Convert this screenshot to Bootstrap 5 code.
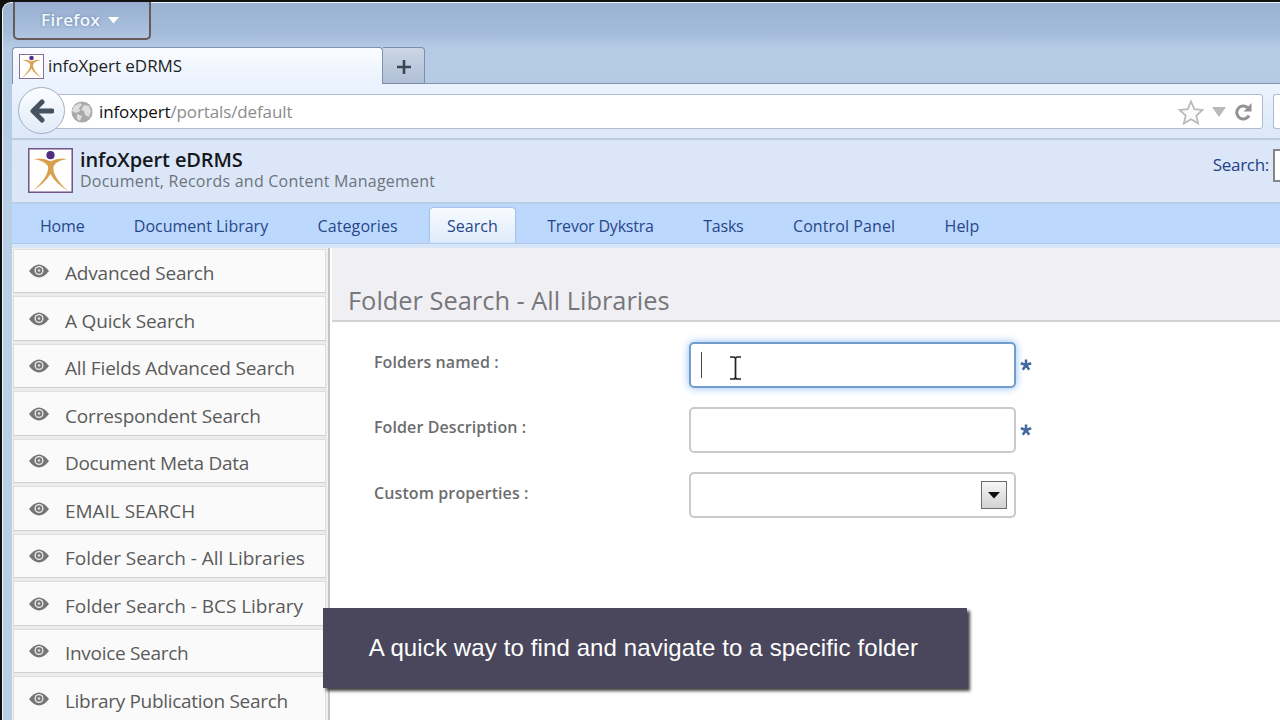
<!DOCTYPE html>
<html lang="en">
<head>
<meta charset="utf-8">
<meta name="viewport" content="width=device-width, initial-scale=1">
<title>infoXpert eDRMS</title>
<link href="https://cdn.jsdelivr.net/npm/bootstrap@5.3.0/dist/css/bootstrap.min.css" rel="stylesheet">
<style>
  body { font-family: "Open Sans", "Noto Sans", sans-serif; background: #111; line-height: 1.2; }
  .screen { width: 1280px; height: 720px; padding: 2px 0 0 2px; }
  .win { height: 718px; padding-left: 9px; border-radius: 9px 0 0 0; border: solid #eef5fc; border-width: 1px 0 0 1px;
    background: linear-gradient(#9bb2d1 0, #a4bbda 30px, #b5cbe6 45px, #b4cae5 82px, #b9cfe6 175px, #b7d0e6 100%); }
  .titlebar { height: 44px; }
  .fx-btn { width: 138px; height: 38px; margin: -1px 0 0 1px; padding-left: 26px; border: 2px solid #645a59; border-top: 0; border-radius: 0 0 5px 5px;
    color: #f4f7fb; font-size: 17px; font-weight: 600; letter-spacing: .35px; text-shadow: 0 0 3px #5f7da5; background: linear-gradient(#97aed0, #afc4e1); }
  .tabstrip { height: 37px; border-bottom: 1px solid #8495ad; }
  .tab-on { width: 371px; height: 37px; padding: 1px 0 0 6px; border: 1px solid #7e92ae; border-bottom: 0; border-radius: 4px 4px 0 0; background: linear-gradient(#fafcff, #eaf2fd); color: #1c1f25; }
  .tab-on span { font-size: 17px; letter-spacing: -.05px; margin-left: 4px; }
  .tab-new { width: 42px; height: 37px; padding-top: 3px; border: 1px solid #7e8ea7; border-left: 0; border-radius: 0 4px 0 0; background: linear-gradient(#cbd6e6, #b0bfd6); }
  .urlrow { height: 56px; background: linear-gradient(#ebf3fe, #dce8f8); border-bottom: 2px solid #bccade; }
  .back { width: 47px; height: 47px; margin-left: 6px; border: 1px solid #a2afc1; background: linear-gradient(#fbfdff, #e1ebf8); z-index: 2; }
  .urlbox { width: 1210px; height: 35px; margin: 1px 0 0 -12px; padding: 2px 9px 0 17px; background: #fff; border: 1px solid #b0bccd; border-radius: 0 3px 3px 0; font-size: 17px; letter-spacing: -.12px; color: #8c8c8c; }
  .urlbox .globe { margin-right: 6px; }
  .urlbox b { font-weight: 400; color: #111; }
  .findbox { height: 35px; margin: 1px 0 0 10px; background: #fff; border: 1px solid #b0bccd; border-right: 0; border-radius: 3px 0 0 3px; }
  .apphead { height: 62px; padding-left: 16px; background: #dbe7f8; color: #22418a; }
  .apphead .names { margin: -1px 0 0 7px; }
  .apphead .ttl { font-size: 20px; line-height: 22px; font-weight: 600; color: #14171c; letter-spacing: -.1px; }
  .apphead .sub { font-size: 16px; line-height: 20px; color: #6d737c; letter-spacing: .23px; }
  .hsearch { font-size: 17px; letter-spacing: -.3px; margin-top: -10px; }
  .hbox { width: 7px; height: 33px; margin-bottom: 11px; border: 2px solid #858585; border-right: 0; background: #fff; }
  .menu { height: 42px; padding-left: 11px; background: #bdd8fd; border-top: 2px solid #b9cde6; border-bottom: 1px solid #afc9f0; gap: 15.4px; }
  .menu a { height: 35px; padding: 9px 17px 0; color: #27478a; font-size: 16px; text-decoration: none; white-space: nowrap; }
  .menu .tight { letter-spacing: -.2px; }
  .menu .loose { letter-spacing: .1px; }
  .menu a.on { background: linear-gradient(#f8fbff, #deebfb); border-radius: 4px 4px 0 0; box-shadow: 0 0 2px #6f8fbb; clip-path: inset(-3px -3px 0 -3px); }
  .body-area { border-top: 4px solid #d8e6f7; background: #fff; }
  .side { width: 318px; background: #efefef; border-right: 2px solid #c4c4c6; padding: 1px 2px 0 1px; }
  .side a { height: 47.5px; padding: 4px 0 0 15px; background: #fafafa; border: solid #dedede; border-width: 1px 1px 3px 1px; box-shadow: inset 0 -1px 0 #cfcfcf; color: #5a5a5a; font-size: 19px; letter-spacing: -.17px; text-decoration: none; border-bottom-color: #ececec; white-space: nowrap; }
  .side a svg { margin-right: 16px; margin-top: -4px; }
  .side .loose { letter-spacing: -.03px; }
  .side .tight { letter-spacing: -.3px; }
  .pagehead { height: 74px; margin-left: 2px; padding: 37px 0 0 16px; background: #f0f0f4; border-bottom: 2px solid #d2d3d5; font-size: 25.4px; line-height: 30px; color: #77777b; }
  .fields { padding-top: 10.4px; }
  .formrow { height: 65.3px; padding-left: 44px; }
  .formrow label { width: 314.5px; font-size: 16px; font-weight: 600; letter-spacing: .1px; color: #6c6c6f; margin-top: -4px; }
  .fld { width: 327px; height: 46px; border: 2px solid #c9c9c9; border-radius: 5px; background: #fff; }
  .fld.focused { border-color: #719dce; box-shadow: 0 0 9px #8fbcf3; }
  .drop { width: 26px; height: 28px; border: 1px solid #6d6d6d; background: linear-gradient(#f6f6f6, #d2d2d2); margin-right: 7px; }
  .caption-box { left: 323px; top: 608px; width: 644px; height: 80px; padding-right: 3px; background: #4a475d; color: #fff; box-shadow: 3px 3px 3px #444; font: 24px "Liberation Sans", sans-serif; letter-spacing: .12px; z-index: 5; }
</style>
</head>
<body class="overflow-hidden">
<svg class="d-none">
  <symbol id="man" viewBox="0 0 44 44"><rect x=".75" y=".75" width="42.500" height="42.500" fill="#fff" stroke="#71578e" stroke-width="1.500"/><path d="M6 11Q14 9 22 13Q31 9 38 11Q28.500 12 25 17.500C23.500 24 29 33 40 42.500Q27 35 22 25.500Q16 35 4 42.500C15 33 20.800 24 19.500 17.500Q15 12 6 11Z" fill="#d9a04c"/><circle cx="22" cy="7" r="4" fill="#542e7e"/></symbol>
  <symbol id="eye" viewBox="0 0 20 14"><path d="M0 7Q5 .5 10 .5T20 7Q15 13.500 10 13.500T0 7Z" fill="#757575"/><circle cx="10" cy="6.500" r="4.500" fill="#eee"/><circle cx="10" cy="6.500" r="3.200" fill="#777"/><circle cx="10" cy="6.500" r="1.300" fill="#ddd"/></symbol>
  <symbol id="star6" viewBox="0 0 12 12"><path d="M6 6V.5M6 6L.8 4.300M6 6L11.200 4.300M6 6L2.800 10.700M6 6L9.200 10.700" stroke="#43699f" stroke-width="2.500"/></symbol>
</svg>
<div class="screen position-relative overflow-hidden">
  <div class="win d-flex flex-column">
    <div class="titlebar"><div class="fx-btn d-flex align-items-center"><span>Firefox</span><svg class="ms-2" width="11" height="7" viewBox="0 0 11 7"><path d="M0 0H11L5.500 6.500Z" fill="#fff"/></svg></div></div>
    <div class="tabstrip d-flex">
      <div class="tab-on d-flex align-items-center"><svg width="25" height="25"><use href="#man"/></svg><span>infoXpert eDRMS</span></div>
      <div class="tab-new d-flex align-items-center justify-content-center"><svg width="16" height="16" viewBox="0 0 16 16"><path d="M8 1V15M1 8H15" stroke="#3c4653" stroke-width="2.600"/></svg></div>
    </div>
    <div class="urlrow d-flex align-items-center flex-shrink-0">
      <div class="back rounded-circle d-flex align-items-center justify-content-center flex-shrink-0 position-relative"><svg width="24" height="24" viewBox="0 0 24 24"><path d="M22 12H4M12 3L3 12L12 21" fill="none" stroke="#46525f" stroke-width="5" stroke-linecap="round" stroke-linejoin="round"/></svg></div>
      <div class="urlbox d-flex align-items-center flex-shrink-0">
        <svg class="globe" width="22" height="22" viewBox="0 0 22 22"><circle cx="11" cy="11" r="10.500" fill="#a9a9a9"/><path d="M3 5L9 2L11 4L8 7L9 10L5 12L1 10ZM13 4L18 5L20 10L18 16L14 14L13 10L10 9ZM6 13L11 15L9 20L6 18Z" fill="#dedede"/></svg>
        <span><b>infoxpert</b>/portals/default</span>
        <svg class="ms-auto" width="26" height="25" viewBox="0 0 26 25"><path d="M13 1.500L16.300 9.200L24.500 10L18.300 15.500L20.200 23.500L13 19.300L5.800 23.500L7.700 15.500L1.500 10L9.700 9.200Z" fill="#fafafa" stroke="#b9b9b9" stroke-width="1.700"/></svg>
        <svg class="ms-2" width="14" height="10" viewBox="0 0 14 10"><path d="M0 0H14L7 10Z" fill="#b9b9b9"/></svg>
        <svg class="ms-2" width="19" height="18" viewBox="0 0 19 18"><path d="M15 12.500A6.500 6.500 0 1 1 13.500 4.500" fill="none" stroke="#929292" stroke-width="3"/><path d="M17.500 0V8.500H9.500Z" fill="#929292"/></svg>
      </div>
      <div class="findbox flex-grow-1"></div>
    </div>
    <header class="apphead d-flex align-items-center flex-shrink-0">
      <svg width="45" height="45"><use href="#man"/></svg>
      <div class="names"><div class="ttl">infoXpert eDRMS</div><div class="sub">Document, Records and Content Management</div></div>
      <div class="ms-auto hsearch me-1">Search:</div><div class="hbox"></div>
    </header>
    <nav class="menu d-flex align-items-end flex-shrink-0">
      <a href="#" class="tight">Home</a><a href="#">Document Library</a><a href="#" class="loose">Categories</a><a href="#" class="on">Search</a><a href="#" class="tight">Trevor Dykstra</a><a href="#" class="tight">Tasks</a><a href="#" class="loose">Control Panel</a><a href="#">Help</a>
    </nav>
    <div class="body-area d-flex flex-grow-1 overflow-hidden">
      <div class="side d-flex flex-column flex-shrink-0">
        <a class="d-flex align-items-center flex-shrink-0" href="#"><svg width="20" height="14"><use href="#eye"/></svg>Advanced Search</a>
        <a class="d-flex align-items-center flex-shrink-0" href="#"><svg width="20" height="14"><use href="#eye"/></svg>A Quick Search</a>
        <a class="d-flex align-items-center flex-shrink-0" href="#"><svg width="20" height="14"><use href="#eye"/></svg>All Fields Advanced Search</a>
        <a class="d-flex align-items-center flex-shrink-0" href="#"><svg width="20" height="14"><use href="#eye"/></svg>Correspondent Search</a>
        <a class="tight d-flex align-items-center flex-shrink-0" href="#"><svg width="20" height="14"><use href="#eye"/></svg>Document Meta Data</a>
        <a class="loose d-flex align-items-center flex-shrink-0" href="#"><svg width="20" height="14"><use href="#eye"/></svg>EMAIL SEARCH</a>
        <a class="loose d-flex align-items-center flex-shrink-0" href="#"><svg width="20" height="14"><use href="#eye"/></svg>Folder Search - All Libraries</a>
        <a class="loose d-flex align-items-center flex-shrink-0" href="#"><svg width="20" height="14"><use href="#eye"/></svg>Folder Search - BCS Library</a>
        <a class="tight d-flex align-items-center flex-shrink-0" href="#"><svg width="20" height="14"><use href="#eye"/></svg>Invoice Search</a>
        <a class="tight d-flex align-items-center flex-shrink-0" href="#"><svg width="20" height="14"><use href="#eye"/></svg>Library Publication Search</a>
      </div>
      <main class="flex-grow-1">
        <h1 class="pagehead mb-0 fw-normal">Folder Search - All Libraries</h1>
        <div class="fields">
          <div class="formrow d-flex align-items-center"><label>Folders named :</label>
            <div class="fld focused d-flex align-items-center"><svg width="50" height="30" viewBox="0 0 50 30"><path d="M10.500 2V28" stroke="#444"/><path d="M39 8H42.500Q44.500 8 44.500 10V28Q44.500 30 42.500 30H39M50 8H46.500Q44.500 8 44.500 10V28Q44.500 30 46.500 30H50" transform="translate(0 -1)" fill="none" stroke="#222" stroke-width="1.700"/></svg></div>
            <svg class="ms-1" width="12" height="12"><use href="#star6"/></svg></div>
          <div class="formrow d-flex align-items-center"><label>Folder Description :</label><div class="fld"></div><svg class="ms-1" width="12" height="12"><use href="#star6"/></svg></div>
          <div class="formrow d-flex align-items-center"><label>Custom properties :</label><div class="fld d-flex align-items-center justify-content-end"><div class="drop d-flex align-items-center justify-content-center"><svg width="12" height="7" viewBox="0 0 12 7"><path d="M0 0H12L6 6.500Z" fill="#111"/></svg></div></div></div>
        </div>
      </main>
    </div>
  </div>
  <div class="caption-box position-absolute d-flex align-items-center justify-content-center">A quick way to find and navigate to a specific folder</div>
</div>
<script src="https://cdn.jsdelivr.net/npm/bootstrap@5.3.0/dist/js/bootstrap.bundle.min.js"></script>
</body>
</html>
